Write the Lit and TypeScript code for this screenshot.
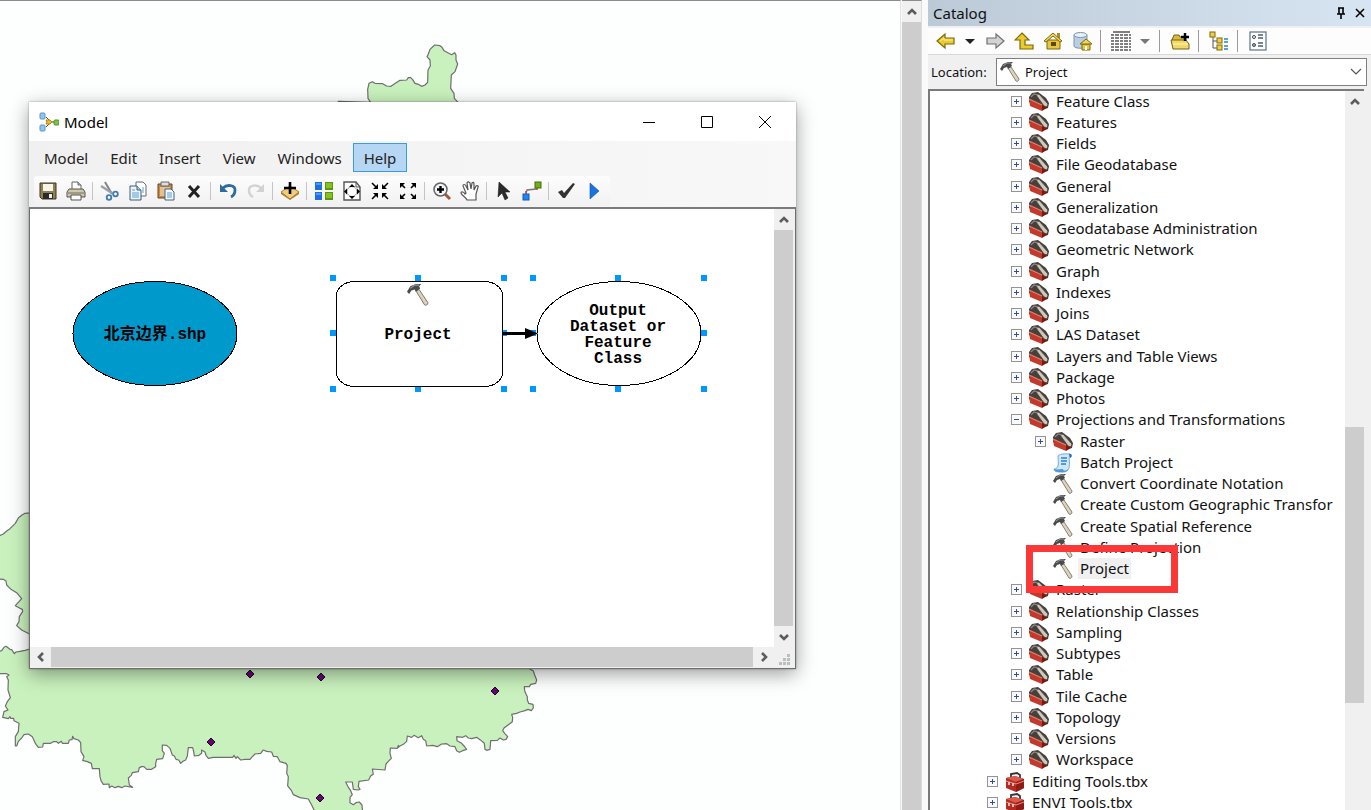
import { LitElement, html, css, svg, nothing } from "lit";
import { customElement, property, state } from "lit/decorators.js";
import { classMap } from "lit/directives/class-map.js";

/* Every glyph is drawn on a 20 x 20 grid. */
const ICONS: Record<string, unknown> = {
  model: svg`<path d="M7 5l4 4M7 15l4-4M13 10h3" stroke="#444" fill="none"/><rect x="1" y="1" width="5" height="6" rx="1" fill="#8fc4ee" stroke="#5b98c8"/><rect x="1" y="13" width="5" height="6" rx="1" fill="#8fc4ee" stroke="#5b98c8"/><path d="M7 8h4l2 2-2 2H7l1-2z" fill="#f5b81c" stroke="#b98410"/><rect x="15" y="8" width="5" height="5" rx="1" fill="#7cc546" stroke="#4f9428"/>`,
  save: svg`<path d="M2 2h16v16H4l-2-2z" fill="#8d8152" stroke="#3b3620"/><rect x="5" y="3" width="10" height="7" fill="#f7f5ea"/><rect x="5" y="12" width="10" height="6" fill="#2a2a2a"/><rect x="11" y="13" width="3" height="4" fill="#eee"/>`,
  print: svg`<path d="M6 9V1h6l3 3v5z" fill="#fff" stroke="#666"/><path d="M12 1v3h3" fill="#9fc8ea" stroke="#666"/><path d="M3 8h14l2 3v5H1v-5z" fill="#cfc8aa" stroke="#555"/><path d="M2 12h16" stroke="#77705a"/><path d="M5 14h10v5H5z" fill="#fff" stroke="#555"/>`,
  cut: svg`<path d="M5 1l7 12" stroke="#80868b" stroke-width="2"/><path d="M1 5l11 7" stroke="#9aa0a5" stroke-width="2.400"/><circle cx="9" cy="16.500" r="2.300" fill="#fff" stroke="#3f7cab" stroke-width="1.800"/><circle cx="15.500" cy="13" r="2.300" fill="#fff" stroke="#3f7cab" stroke-width="1.800"/>`,
  copy: svg`<path d="M8 1h7l3 3v11H8z" fill="#fff" stroke="#5c6c79"/><path d="M2 5h7l4 4v10H2z" fill="#e9f4fd" stroke="#3f5c74"/><path d="M9 5v4h4" fill="#a9d2f2" stroke="#3f5c74"/><path d="M4 9h3M4 12h7M4 14h7M4 16h7M14 7h2M14 9h2M14 11h2" stroke="#5d9fd3"/>`,
  paste: svg`<path d="M2 3h14v14H2z" fill="#c08a4c" stroke="#6d4519"/><path d="M5 1h8v4H5z" fill="#ddd" stroke="#666"/><path d="M4 6h10v9H4z" fill="#e5c091"/><path d="M9 8h6l3 3v8H9z" fill="#f3f9fe" stroke="#47617a"/><path d="M11 12h5M11 14h5M11 16h5" stroke="#5d9fd3"/>`,
  remove: svg`<path d="M5 5l10 11M15 5L5 16" stroke="#222" stroke-width="3"/>`,
  undo: svg`<path d="M5 7c4-4 12-3 12 2 0 4-2 6-4 7" fill="none" stroke="#2e6ca0" stroke-width="2.800"/><path d="M2 3v8h8z" fill="#2e6ca0"/>`,
  redo: svg`<path d="M15 7C11 3 3 4 3 9c0 4 2 6 4 7" fill="none" stroke="#d2d2d2" stroke-width="2.400"/><path d="M18 3v8h-8z" fill="#d2d2d2"/>`,
  add: svg`<path d="M10 5l9 6-9 7-9-7z" fill="#f0cd7c" stroke="#a97e2b"/><path d="M1 11l9 7 9-7v2l-9 6-9-6z" fill="#a97e2b"/><path d="M10 1v12M4 7h12" stroke="#000" stroke-width="2.600"/>`,
  layout: svg`<path d="M1 1h7v8H1zM1 11h7v8H1z" fill="#1f6fe0"/><path d="M2 2h5v2H2zM2 12h5v2H2z" fill="#4b9cf5"/><path d="M11 1h8v8h-8zM11 11h8v8h-8z" fill="#5d9410"/><path d="M12 2h6v5h-6zM12 12h6v5h-6z" fill="#86c022"/>`,
  extent: svg`<path d="M2 1h12l4 5v13H2z" fill="#fff" stroke="#555" stroke-width="1.400"/><path d="M14 1v5h4" fill="none" stroke="#555"/><circle cx="10" cy="10.500" r="5" fill="none" stroke="#999"/><path d="M10 3l3 3H7zM10 18l3-3H7zM2 10.500l3-3v6zM18 10.500l-3-3v6z" fill="#000"/>`,
  zoomin: svg`<g stroke="#000" stroke-width="1.600"><path d="M2 2l4 4M18 2l-4 4M2 18l4-4M18 18l-4-4"/></g><path d="M8 3v5H3zM12 3v5h5zM8 17v-5H3zM12 17v-5h5z" fill="#000"/>`,
  zoomout: svg`<g stroke="#000" stroke-width="1.600"><path d="M7 7L4 4M13 7l3-3M7 13l-3 3M13 13l3 3"/></g><path d="M2 2h5L2 7zM18 2h-5l5 5zM2 18h5l-5-5zM18 18h-5l5-5z" fill="#000"/>`,
  magnify: svg`<path d="M13 13l5 5" stroke="#9c5b3b" stroke-width="3"/><circle cx="8.500" cy="8.500" r="6.500" fill="#eef5fa" stroke="#666" stroke-width="1.500"/><path d="M8.500 5v7M5 8.500h7" stroke="#000" stroke-width="2.400"/>`,
  pan: svg`<path d="M7 19c-1-3-5-4-6-7 0-2 3-1 4 1l1-1L3 5c0-2 2-2 3 0l2 4L7 2c1-2 2-1 3 0l1 6 1-6c1-1 2-1 2 1v6l2-4c1-1 3 0 2 1l-2 7v6z" fill="#fff" stroke="#555" stroke-width="1.200"/>`,
  pointer: svg`<path d="M5 1l11 10-5 0 3 6-3 2-3-7-4 4z" fill="#2b2b2b" stroke="#111" stroke-width=".500"/>`,
  connect: svg`<path d="M4 12l1-3 9-1 1-3" fill="none" stroke="#777" stroke-width="1.400"/><path d="M4 10v3M15 6v3" stroke="#e33" stroke-width="1.500"/><rect x="1" y="13" width="6" height="6" fill="#2583ef" stroke="#125bb5"/><rect x="13" y="1" width="6" height="6" fill="#6fae18" stroke="#3f7308"/>`,
  check: svg`<path d="M2 11l4-2 2 3 9-10 2 1L9 17H7z" fill="#333"/>`,
  run: svg`<path d="M6 2l9 8-9 8z" fill="#1a72dc" stroke="#0f55b0" stroke-width=".600"/>`,
  back: svg`<path d="M1 10l8-7v4h9v6H9v4z" fill="#eccb2e" stroke="#7d6a0a" stroke-width="1.200"/><path d="M4 10l4-3v2h9" stroke="#fbee9a" fill="none"/>`,
  forward: svg`<path d="M19 10l-8-7v4H2v6h9v4z" fill="#d3d3d3" stroke="#707070" stroke-width="1.200"/>`,
  up: svg`<path d="M8 2l7 7h-4v5h8v4H6V9H1z" fill="#eccb2e" stroke="#7d6a0a" stroke-width="1.200"/>`,
  home: svg`<path d="M14 2h3v6h-3z" fill="#b58a20"/><path d="M4 9h13v9H4z" fill="#e9c53f" stroke="#7d6a0a"/><path d="M1 10l9-8 9 8-2 1-7-6-7 6z" fill="#f0d560" stroke="#7d6a0a"/><path d="M8 11h5v4H8z" fill="#5a4a10"/>`,
  database: svg`<path d="M2 4v11c0 3 13 3 13 0V4" fill="#b9cfe4" stroke="#8295a8"/><ellipse cx="8.500" cy="4" rx="6.500" ry="2.500" fill="#e6f0f8" stroke="#8295a8"/><path d="M10 13h8v6h-8z" fill="#e9c53f" stroke="#7d6a0a"/><path d="M8 13l6-5 6 5z" fill="#f0d560" stroke="#7d6a0a"/><path d="M13 15h2v4h-2z" fill="#fff"/>`,
  table: svg`<path d="M2 1h17" stroke="#555" stroke-width="1.500"/><path d="M0 4h20M0 7h20M0 10h20M0 13h20M0 16h20M0 19h20" stroke="#555" stroke-width="1.500" stroke-dasharray="3 1 4 1"/>`,
  folder: svg`<path d="M2 9l2-5h5l1 2h6v5H2z" fill="#d9bb3a" stroke="#75621a"/><path d="M1 9h15l3 4v5H3z" fill="#f0d968" stroke="#75621a"/><path d="M3 13h15" stroke="#fff5b8"/><path d="M15 2v8M11 6h8" stroke="#000" stroke-width="2.400"/>`,
  hierarchy: svg`<path d="M4 6v11h5M4 10h5" fill="none" stroke="#555"/><rect x="1" y="1" width="5" height="5" fill="#f0cf46" stroke="#7d6a0a"/><rect x="8" y="7" width="5" height="5" fill="#f0cf46" stroke="#7d6a0a"/><rect x="8" y="14" width="5" height="5" fill="#f0cf46" stroke="#7d6a0a"/><path d="M15 8h4M15 11h4M15 15h4M15 18h4" stroke="#2d83c6" stroke-width="1.500"/>`,
  options: svg`<rect x="2" y="1" width="16" height="18" fill="#fbfdff" stroke="#5e7287" stroke-width="1.200"/><circle cx="6" cy="6" r="1.500" fill="none" stroke="#444"/><circle cx="6" cy="14" r="1.500" fill="#9bb8cf" stroke="#444"/><path d="M10 4h5M10 7h5M10 12h5M10 15h5" stroke="#4d5f70" stroke-width="1.400"/>`,
  hammer: svg`<path d="M8 6l3-1 8 12c0 2-2 3-3 2z" fill="#ddd3bd" stroke="#7c7364" stroke-width=".900"/><path d="M0 7l3-5 5-2 5 0-2 2 1 2-4 3-1-2-3 1-2 3z" fill="#4b4b4b"/><path d="M3 4l4-3 4 0" stroke="#999" fill="none"/>`,
  toolset: svg`<path d="M0 5l3-4 6-1 4 3 4 3 3 5-1 5-6 2L0 10z" fill="#45403d"/><path d="M0 7l13 6v6L1 14z" fill="#c23a2c"/><path d="M0 7l13 6" stroke="#ec7a66" stroke-width="1.200"/><path d="M13 14l6-3v4l-6 4z" fill="#7d1811"/><path d="M7 3l3-1 9 10-1 3-3-1z" fill="#cfc8b8" stroke="#403c38" stroke-width=".800"/><path d="M2 5l3-3 4 1" stroke="#8d8882" stroke-width="1.200" fill="none"/>`,
  toolbox: svg`<path d="M6 5V2l6-1 3 2v3" fill="none" stroke="#333" stroke-width="1.800"/><path d="M1 6l9-2 9 3v9l-8 4-10-4z" fill="#b52a20"/><path d="M1 6l9-2 9 3-8 3z" fill="#dc5a4b"/><path d="M11 10l8-3v9l-8 4z" fill="#8f1c14"/><path d="M1 9l10 3 8-3" stroke="#f08f80" fill="none"/><path d="M4 10v3M8 11v3" stroke="#ddd" stroke-width="1.600"/>`,
  script: svg`<path d="M5 3c3-3 9-2 12-2-2 4 1 12-2 16-3 3-7 2-9 2-3 0-5-1-5-3 6 0 4-9 4-13z" fill="#cfe7fb" stroke="#5a9bd4" stroke-width=".800"/><path d="M8 5h6M8 8h6M8 11h5" stroke="#3583c6" stroke-width="1.400"/><path d="M16 1c3-1 4 3 1 4z" fill="#2f6fae"/><path d="M1 16c3 1 6 0 9 0 0 2 3 2 5 0-1 4-6 3-9 3-3 0-5-1-5-3z" fill="#4d97d8"/>`,
};

const icon = (name: string) =>
  html`<svg class="icon" viewBox="0 0 20 20" aria-hidden="true">${ICONS[name]}</svg>`;

const CHEVRONS: Record<string, string> = {
  up: "M2 8l4-4 4 4",
  down: "M2 4l4 4 4-4",
  left: "M8 2L4 6l4 4",
  right: "M4 2l4 4-4 4",
};

const iconStyles = css`
  .icon { display: block; width: 20px; height: 20px; flex: none; }
  button { font: inherit; color: inherit; background: none; border: 0; padding: 0; margin: 0; }
`;

/* A scroll track; the shares say how much of it lies before, in and after the thumb. */
@customElement("scroll-track")
class ScrollTrack extends LitElement {
  @property() axis = "y";
  @property({ type: Number }) before = 0;
  @property({ type: Number }) thumb = 1;
  @property({ type: Number }) after = 0;
  @property({ type: Boolean }) endless = false;

  static styles = [iconStyles, css`
    :host { display: block; background: #f0f0f0; min-width: 0; min-height: 0; }
    .track { display: flex; width: 100%; height: 100%; }
    .track.y { flex-direction: column; }
    .arrow { flex: 0 0 21px; display: grid; place-items: center; }
    .chevron { width: 12px; height: 12px; display: block; }
    .chevron path { fill: none; stroke: #5c5c5c; stroke-width: 2.6; }
    .thumb { background: #cdcdcd; }
  `];

  private arrow(dir: string) {
    return html`<button class="arrow" aria-label="Scroll ${dir}">
      <svg class="chevron" viewBox="0 0 12 12"><path d=${CHEVRONS[dir]} /></svg>
    </button>`;
  }

  render() {
    const y = this.axis === "y";
    return html`<div class=${classMap({ track: true, y })}>
      ${this.arrow(y ? "up" : "left")}
      <div style="flex:${this.before}"></div>
      <div class="thumb" style="flex:${this.thumb}"></div>
      <div style="flex:${this.after}"></div>
      ${this.endless ? nothing : this.arrow(y ? "down" : "right")}
    </div>`;
  }
}

@customElement("map-view")
class MapView extends LitElement {
  static styles = css`
    :host { display: block; background: #fdfefe; overflow: hidden; }
    .map { display: block; width: 100%; height: 100%; }
    .land { fill: #c9f1bd; stroke: #6f6f6f; stroke-width: 3.6; stroke-linejoin: round; }
    .site { fill: #6d007c; stroke: #111; stroke-width: 1; }
  `;

  private sites = [[250, 673], [321, 676], [495, 690], [211, 741], [320, 797]];

  render() {
    return html`<svg class="map" role="img" aria-label="Map">
      <g transform="translate(340 29) scale(.33333)">
        <path class="land" d="M-18 260L-5 214 92 217 84 205 83 178 87 160 97 155 105 160 128 161 140 168 153 169 166 160 180 151 200 150 205 143 212 143 218 149 225 160 235 163 245 169 255 165 263 157 264 120 271 108 270 90 261 80 265 72 270 58 284 45 300 47 306 52 312 62 335 74 344 68 348 75 348 90 353 102 345 125 334 135 332 175 342 190 343 205 354 217V260z"/>
      </g>
      <g transform="translate(0 499) scale(.33333)">
        <path class="land" d="M-20 110L0 106 10 102 20 93 30 86 46 70 55 54 65 46 75 40 120 36V415L90 403 65 390 50 377 57 365 58 350 68 335 67 328 60 325 46 317 57 305 65 296 50 278 40 272 33 268 20 255 18 243 10 238-20 236z"/>
        <path class="land" d="M-20 458L5 452 12 442 18 439 30 448 35 449 43 461 48 456 60 454 75 451 90 447V380H1560L1590 507 1600 513 1604 525 1610 540 1607 550 1592 553 1588 560 1573 560 1574 572 1578 582 1582 590 1582 600 1586 610 1599 613 1600 624 1594 632 1584 628 1575 632 1560 636 1550 640 1535 643 1538 652 1537 665 1525 674 1512 684 1508 692 1514 700 1523 710 1518 718 1510 720 1500 714 1492 721 1472 722 1470 748 1460 751 1455 748 1453 730 1440 719 1430 712 1415 716 1405 714 1397 707 1388 712 1370 710 1371 722 1385 730 1392 738 1400 748 1388 752 1378 757 1370 752 1365 740 1350 738 1340 731 1325 732 1312 740 1298 736 1280 738 1277 722 1270 718 1265 707 1255 713 1242 706 1235 712 1222 708 1220 724 1210 733 1200 738 1195 742 1195 736 1192 745 1171 744 1170 760 1174 775 1165 784 1158 792 1155 810 1117 807 1120 822 1112 828 1106 840 1077 844 1075 860 1080 868 1074 870 1060 868 1057 846 1037 846 1045 862 1052 872 1057 884 1050 892 1050 908 1060 914 1068 908 1078 906 1086 915 1088 940H947L935 915 925 897 900 893 880 884 875 873 863 858 865 830 860 820 862 797 858 790 840 785 832 770 820 769 815 756 800 754 790 750 782 760 765 762 755 772 750 778 735 778 722 780 712 770 708 775 702 766 698 772 640 772 625 775 618 766 615 756 605 750 605 760 597 766 583 768 581 755 578 743 565 743 562 768 557 780 550 783 542 790 536 780 528 778 523 768 517 765 510 745 500 736 487 735 487 752 493 760 488 776 470 778 467 790 467 800 455 808 440 808 432 800 425 800 418 803 415 815 397 818 394 826 385 834 388 855 398 862 375 858 365 863 355 859 345 863 335 858 328 863 327 852 310 853 303 842 300 830 298 806 277 806 274 790 262 785 248 781 252 770 243 755 242 728 235 720 222 716 218 709 216 719 208 720 205 730 187 730 184 724 175 730 170 725 160 725 152 730 130 730 128 741 115 742 107 732 97 710 85 702 72 704 65 714 55 724 50 738 46 738 46 710 55 695 57 670 42 662 41 655 32 655 30 650 25 656 8 652 12 635 24 630 16 618 22 605 31 593 24 570 25 540 20 530 27 525 20 521-20 521z"/>
      </g>
      ${this.sites.map(([x, y]) => svg`<path class="site" d="M${x} ${y - 4}l4 4-4 4-4-4z"/>`)}
    </svg>`;
  }
}

const MODEL_TOOLS: [string, string][][] = [
  [["save", "Save"], ["print", "Print"]],
  [["cut", "Cut"], ["copy", "Copy"], ["paste", "Paste"], ["remove", "Delete"]],
  [["undo", "Undo"], ["redo", "Redo"]],
  [["add", "Add Data or Tool"]],
  [["layout", "Auto Layout"], ["extent", "Full Extent"], ["zoomin", "Fixed Zoom In"], ["zoomout", "Fixed Zoom Out"]],
  [["magnify", "Zoom In"], ["pan", "Pan"]],
  [["pointer", "Select"], ["connect", "Connect"]],
  [["check", "Validate Entire Model"], ["run", "Run"]],
];

@customElement("model-window")
class ModelWindow extends LitElement {
  @state() private active = "Help";

  static styles = [iconStyles, css`
    :host {
      display: flex; flex-direction: column; background: #fff;
      box-shadow: 0 0 2px rgba(0, 0, 0, .35), 0 5px 18px rgba(0, 0, 0, .38);
      font: 15px/20px "Noto Sans", "Open Sans", sans-serif; color: #000;
    }
    .title { display: flex; align-items: center; height: 39px; padding: 0 2px 0 10px; }
    .name { flex: 1; font-size: 15px; font-weight: 400; margin: 0; padding-left: 5px; }
    .control { width: 58px; height: 38px; display: grid; place-items: center; }
    .control svg { width: 12px; height: 12px; display: block; }
    .control path { fill: none; stroke: #000; }
    .chrome { background: linear-gradient(90deg, #f0f0f0, #f8f8f8); }
    .menu { display: flex; padding: 2px 4px 4px; }
    .entry { height: 29px; padding: 0 10px; border: 1px solid transparent; color: #222; }
    .entry.active { background: #b5d7f3; border-color: #3c9be6; }
    .tools { display: inline-flex; align-items: center; height: 30px; margin: 0 4px 1px 5px; padding-right: 2px; background: linear-gradient(#fdfdfd, #f1f1f1); border-radius: 3px; vertical-align: top; }
    .tool { width: 28px; height: 28px; display: grid; place-items: center; }
    .divider { width: 1px; height: 18px; margin: 0 3px 0 2px; background: #c4c4c4; }
    .frame { flex: 1; min-height: 0; display: grid; grid-template: minmax(0, 1fr) 20px / minmax(0, 1fr) 19px; padding: 0 2px 1px 0; border: 1px solid #6e6e6e; border-top: 2px solid #7b7b7b; background: #f0f0f0; }
    .diagram { display: block; width: 100%; height: 100%; background: #fff; }
    .shape { fill: #fff; stroke: #000; shape-rendering: crispEdges; }
    .shape.input { fill: #0099cc; }
    .handle { fill: #0098ff; }
    .link { stroke: #000; stroke-width: 3; }
    .caption { font: bold 16px "Liberation Mono", "Noto Sans CJK SC", monospace; text-anchor: middle; fill: #000; }
    .grip { align-self: end; justify-self: end; width: 14px; height: 14px; fill: #bdbdbd; }
  `];

  private handles(x0: number, x1: number, x2: number) {
    return [[x0, 278], [x1, 278], [x2, 278], [x0, 333], [x2, 333], [x0, 389], [x1, 389], [x2, 389]].map(
      ([x, y]) => svg`<rect class="handle" x=${x - 3} y=${y - 3} width="6" height="6"/>`
    );
  }

  render() {
    return html`
      <div class="title">
        ${icon("model")}
        <h1 class="name">Model</h1>
        <button class="control" aria-label="Minimize"><svg viewBox="0 0 12 12"><path d="M0 6.500h12" /></svg></button>
        <button class="control" aria-label="Maximize"><svg viewBox="0 0 12 12"><path d="M.5 .5h11v11H.5z" /></svg></button>
        <button class="control" aria-label="Close"><svg viewBox="0 0 12 12"><path d="M0 0l12 12M12 0L0 12" /></svg></button>
      </div>
      <div class="chrome">
        <nav class="menu">
          ${["Model", "Edit", "Insert", "View", "Windows", "Help"].map(
            (m) => html`<button class=${classMap({ entry: true, active: m === this.active })} @click=${() => (this.active = m)}>${m}</button>`
          )}
        </nav>
        <div class="tools">
          ${MODEL_TOOLS.map((group, i) => html`
            ${i ? html`<span class="divider"></span>` : nothing}
            ${group.map(([id, label]) => html`<button class="tool" aria-label=${label}>${icon(id)}</button>`)}
          `)}
        </div>
      </div>
      <div class="frame">
        <svg class="diagram">
          <g transform="translate(-30 -209)">
            <ellipse class="shape input" cx="155" cy="333.500" rx="82" ry="52"/>
            <text class="caption" x="155" y="339">北京边界.shp</text>
            ${this.handles(333, 418, 504)}
            ${this.handles(533, 618, 704)}
            <rect class="shape" x="336.500" y="281.500" width="166" height="105" rx="18" ry="14"/>
            <svg x="407" y="284" width="22" height="22" viewBox="0 0 20 20">${ICONS.hammer}</svg>
            <text class="caption" x="418" y="339">Project</text>
            <ellipse class="shape" cx="619" cy="333.500" rx="82" ry="52"/>
            <path class="link" d="M502 333.500h26"/>
            <path d="M525 328l13 5.500-13 5.500z"/>
            <text class="caption" x="618" y="315">
              <tspan x="618">Output</tspan><tspan x="618" dy="16">Dataset or</tspan><tspan x="618" dy="16">Feature</tspan><tspan x="618" dy="16">Class</tspan>
            </text>
          </g>
        </svg>
        <scroll-track axis="y"></scroll-track>
        <scroll-track axis="x"></scroll-track>
        <svg class="grip" viewBox="0 0 14 14"><path d="M8 1h3v3H8zM4 5h3v3H4zM8 5h3v3H8zM0 9h3v3H0zM4 9h3v3H4zM8 9h3v3H8z"/></svg>
      </div>`;
  }
}

interface TreeRow { label: string; level: number; glyph: string; toggle?: "+" | "-"; selected?: boolean; }

const toolset = (label: string): TreeRow => ({ label, level: 1, glyph: "toolset", toggle: "+" });
const tool = (label: string, glyph = "hammer"): TreeRow => ({ label, level: 2, glyph });

const TREE: TreeRow[] = [
  ...["Feature Class", "Features", "Fields", "File Geodatabase", "General", "Generalization",
    "Geodatabase Administration", "Geometric Network", "Graph", "Indexes", "Joins", "LAS Dataset",
    "Layers and Table Views", "Package", "Photos"].map(toolset),
  { label: "Projections and Transformations", level: 1, glyph: "toolset", toggle: "-" },
  { label: "Raster", level: 2, glyph: "toolset", toggle: "+" },
  tool("Batch Project", "script"),
  tool("Convert Coordinate Notation"),
  tool("Create Custom Geographic Transfor"),
  tool("Create Spatial Reference"),
  tool("Define Projection"),
  { ...tool("Project"), selected: true },
  ...["Raster", "Relationship Classes", "Sampling", "Subtypes", "Table", "Tile Cache", "Topology",
    "Versions", "Workspace"].map(toolset),
  { label: "Editing Tools.tbx", level: 0, glyph: "toolbox", toggle: "+" },
  { label: "ENVI Tools.tbx", level: 0, glyph: "toolbox", toggle: "+" },
];

@customElement("catalog-panel")
class CatalogPanel extends LitElement {
  static styles = [iconStyles, css`
    :host { display: flex; flex-direction: column; background: #f0f0f0; font: 15px/21px "Noto Sans", "Open Sans", sans-serif; color: #111; min-height: 0; }
    .head { display: flex; align-items: center; height: 26px; flex: none; padding: 0 2px 0 5px; background: linear-gradient(90deg, #bccad8, #d7e5f2); }
    .name { flex: 1; margin: 0; font-size: 15px; font-weight: 400; }
    .small { width: 19px; height: 20px; display: grid; place-items: center; }
    .small svg { width: 12px; height: 12px; }
    .small path { stroke: #000; fill: none; stroke-width: 1.6; }
    .bar { display: flex; align-items: center; height: 26px; flex: none; padding-left: 3px; margin-top: 2px; background: #fdfdfd; border-bottom: 1px solid #d8d8d8; }
    .tool { width: 29px; height: 26px; display: grid; place-items: center; }
    .drop { width: 20px; height: 26px; display: grid; place-items: center; }
    .drop::before { content: ""; border: 5px solid transparent; border-top-color: #222; border-bottom: 0; }
    .drop.dim::before { border-top-color: #777; }
    .divider { width: 1px; height: 22px; margin: 0 5px 0 4px; background: #9a9a9a; }
    .place { display: grid; grid-template-columns: 68px 1fr; align-items: center; flex: none; padding: 3px 4px 3px 0; }
    .caption { font-size: 13px; padding-left: 3px; }
    .combo { display: grid; align-items: center; background: #fff; border: 1px solid #7f7f7f; height: 26px; }
    .combo > * { grid-area: 1 / 1; }
    .combo .icon { margin-left: 3px; pointer-events: none; z-index: 1; }
    .combo .arrow { justify-self: end; margin-right: 4px; width: 12px; height: 12px; fill: none; stroke: #555; stroke-width: 1.2; pointer-events: none; z-index: 1; }
    .choice { appearance: none; width: 100%; height: 26px; border: 0; background: none; font: 13px "Noto Sans", "Open Sans", sans-serif; color: #111; padding: 0 24px 0 28px; }
    .box { flex: 1; min-height: 0; display: grid; grid-template-columns: minmax(0, 1fr) 19px; margin-right: 7px; border-left: 2px solid #7a7a7a; border-top: 2px solid #7a7a7a; background: #fff; overflow: hidden; }
    .tree { list-style: none; margin: 0; padding: 0; overflow: hidden; }
    .row { position: relative; display: flex; align-items: center; height: 21px; white-space: nowrap; }
    .row:nth-child(4n) { margin-bottom: 1px; }
    .level-0 { padding-left: 57px; }
    .level-1 { padding-left: 81px; }
    .level-2 { padding-left: 105px; }
    .toggle { flex: none; width: 11px; height: 11px; margin-right: 7px; display: block; }
    .toggle svg { display: block; width: 11px; height: 11px; shape-rendering: crispEdges; }
    .toggle rect { fill: #fafafa; stroke: #949494; }
    .toggle path { fill: none; stroke: #2f4f9f; }
    .label { margin-left: 5px; padding: 0 2px; }
    .selected .label { background: #f0f0f0; }
    .mark { position: absolute; left: 96px; top: -13px; width: 152px; height: 48px; box-sizing: border-box; border: 7px solid #fb3838; z-index: 2; }
  `];

  private toolButton(id: string, label: string) {
    return html`<button class="tool" aria-label=${label}>${icon(id)}</button>`;
  }

  private row(r: TreeRow) {
    return html`<li class="row level-${r.level} ${r.selected ? "selected" : ""}" role="treeitem" aria-level=${r.level + 1}>
      ${r.toggle
        ? html`<button class="toggle" aria-label="Toggle ${r.label}">
            <svg viewBox="0 0 11 11"><rect x=".5" y=".5" width="10" height="10" /><path d=${r.toggle === "+" ? "M3 5.500h5M5.500 3v5" : "M3 5.500h5"} /></svg>
          </button>`
        : html`<span class="toggle"></span>`}
      ${icon(r.glyph)}
      <span class="label">${r.label}</span>
      ${r.selected ? html`<span class="mark"></span>` : nothing}
    </li>`;
  }

  render() {
    return html`
      <div class="head">
        <h2 class="name">Catalog</h2>
        <button class="small" aria-label="Pin"><svg viewBox="0 0 12 12"><path d="M3 1h6M4 1v6M8 1v6M2 7h8M6 7v5" /></svg></button>
        <button class="small" aria-label="Close"><svg viewBox="0 0 12 12"><path d="M2 2l8 8M10 2l-8 8" /></svg></button>
      </div>
      <div class="bar">
        ${this.toolButton("back", "Back")}
        <button class="drop" aria-label="History"></button>
        ${this.toolButton("forward", "Forward")}
        ${this.toolButton("up", "Up One Level")}
        ${this.toolButton("home", "Home Folder")}
        ${this.toolButton("database", "Default Geodatabase")}
        <span class="divider"></span>
        ${this.toolButton("table", "View")}
        <button class="drop dim" aria-label="View options"></button>
        <span class="divider"></span>
        ${this.toolButton("folder", "Connect To Folder")}
        <span class="divider"></span>
        ${this.toolButton("hierarchy", "Toggle Contents Panel")}
        <span class="divider"></span>
        ${this.toolButton("options", "Options")}
      </div>
      <div class="place">
        <label class="caption" for="location">Location:</label>
        <div class="combo">
          ${icon("hammer")}
          <select class="choice" id="location"><option>Project</option></select>
          <svg class="arrow" viewBox="0 0 12 12"><path d="M1 3l5 5 5-5" /></svg>
        </div>
      </div>
      <div class="box">
        <ul class="tree" role="tree">${TREE.map((r) => this.row(r))}</ul>
        <scroll-track axis="y" before="315" thumb="276" after="107" endless></scroll-track>
      </div>`;
  }
}

@customElement("app-root")
class AppRoot extends LitElement {
  static styles = css`
    :host { display: grid; grid-template: minmax(0, 1fr) / minmax(0, 1fr) 20px 449px; height: 100vh; overflow: hidden; background: #fafafa; }
    .desk { position: relative; display: grid; margin-right: 1px; border-top: 1px solid #8c8c8c; border-right: 1px solid #e2e2e2; }
    .floating { position: absolute; left: 29px; top: 101px; width: 767px; height: 567px; }
    .rail { border-right: 1px solid #dcdcdc; border-top: 1px solid #8c8c8c; }
    .side { margin-left: 6px; }
  `;

  render() {
    return html`
      <main class="desk">
        <map-view></map-view>
        <model-window class="floating"></model-window>
      </main>
      <scroll-track class="rail" axis="y" endless></scroll-track>
      <catalog-panel class="side"></catalog-panel>`;
  }
}
